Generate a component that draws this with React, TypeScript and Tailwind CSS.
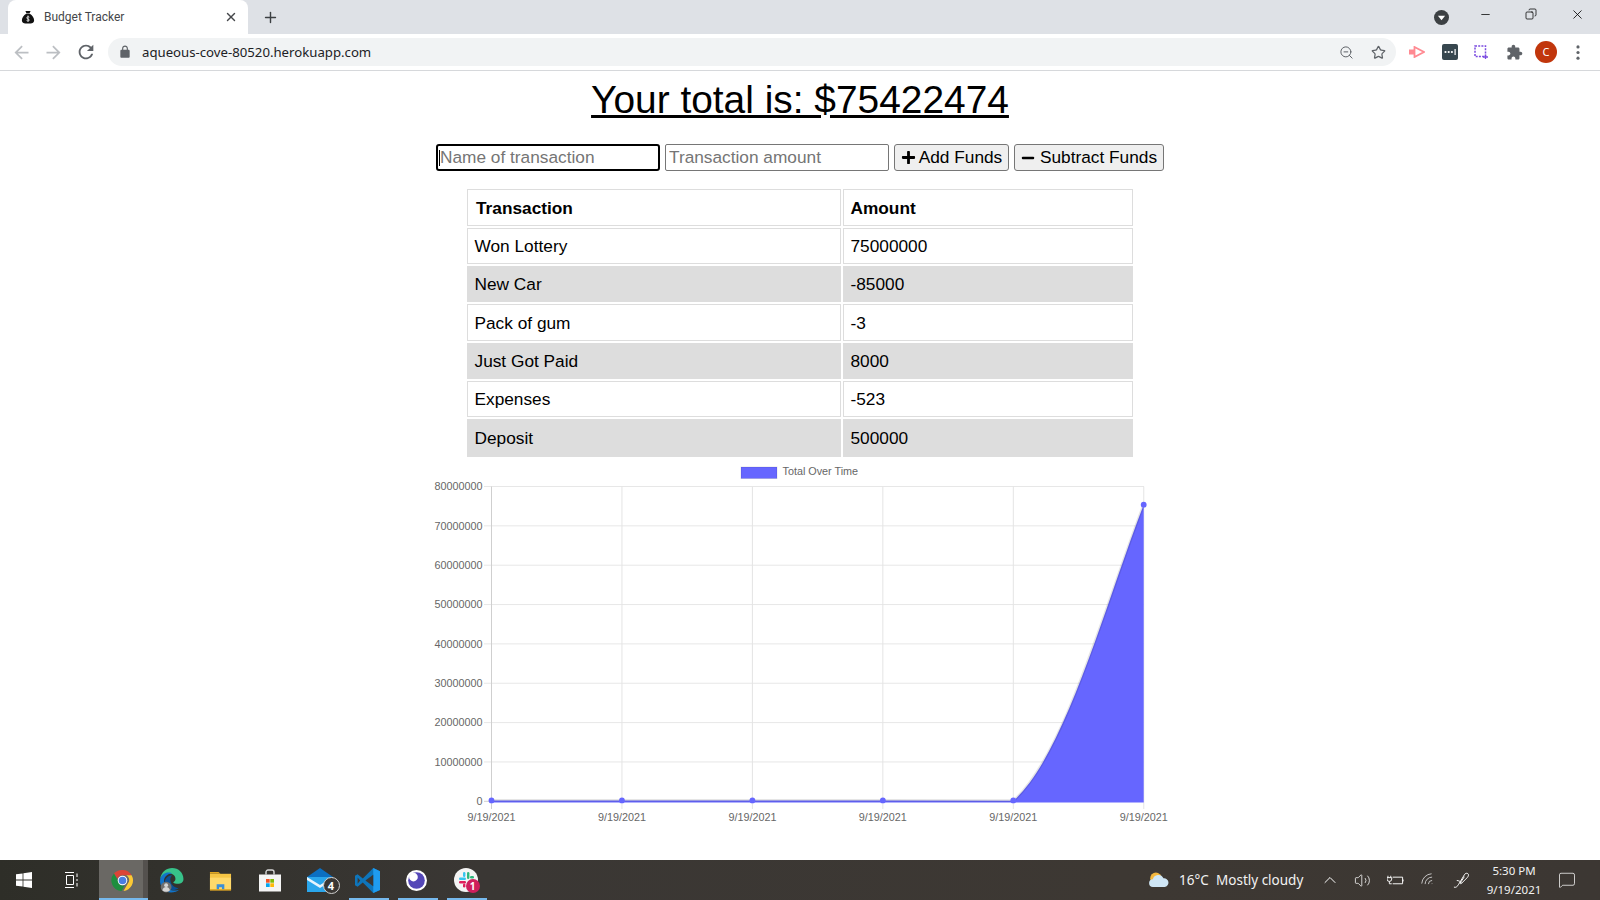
import React from "react";
import { FaPlus, FaMinus } from "react-icons/fa";
import { Plus, X, ZoomOut, Star, Minus, Copy, ChevronUp, Volume2, Wifi, MessageSquare } from "lucide-react";

const rows: [string, string, string][] = [
  ["Won Lottery", "75000000", "h-[36px]"],
  ["New Car", "-85000", "h-[36px]"],
  ["Pack of gum", "-3", "h-[37px]"],
  ["Just Got Paid", "8000", "h-[36px]"],
  ["Expenses", "-523", "h-[36px]"],
  ["Deposit", "500000", "h-[38px]"],
];

const X0 = 491.5;
const XS = 130.45;
const YS = 39.35;
const ticks = [80000000, 70000000, 60000000, 50000000, 40000000, 30000000, 20000000, 10000000, 0];
const xs = [0, 1, 2, 3, 4, 5].map((i) => X0 + XS * i);

const curveD = "C1065 755 1105 605 1143.7 504.7";

function Chart() {
  return (
    <svg viewBox="420 460 760 370" className="block w-[760px] h-[370px] shrink-0 mt-[1px]" style={{ fontFamily: '"Liberation Sans", Arial, sans-serif' }}>
      <rect x="741" y="467" width="36" height="11.5" fill="#6666ff" stroke="rgba(0,0,0,0.1)" strokeWidth="1" />
      <text x="782.5" y="475" fontSize="10.8" fill="#666">Total Over Time</text>
      {ticks.map((t, i) => {
        const y = 486.5 + YS * i;
        return (
          <g key={t}>
            <line x1={484} x2={1144} y1={y} y2={y} stroke={i === 8 ? "#cfcfcf" : "#e7e7e7"} strokeWidth="1" />
            <text x="482.5" y={y + 3.8} fontSize="10.8" fill="#666" textAnchor="end">{t}</text>
          </g>
        );
      })}
      {xs.map((x, i) => (
        <g key={i}>
          <line x1={x} x2={x} y1={486.5} y2={809} stroke={i === 0 ? "#cfcfcf" : "#e4e4e4"} strokeWidth="1" />
          <text x={x} y={820.5} fontSize="10.8" fill="#666" textAnchor="middle">9/19/2021</text>
        </g>
      ))}
      <path d={`M491.5 800.4 L883 800.4 L1013.5 800.7 ${curveD} L1143.7 802.4 L491.5 802.4 Z`} fill="#6666ff" />
      <path d={`M491.5 800.4 L883 800.4 L1013.5 800.7 ${curveD}`} fill="none" stroke="rgba(0,0,0,0.1)" strokeWidth="2.7" />
      {xs.map((x, i) => (
        <circle key={i} cx={i === 5 ? 1143.7 : x} cy={i === 5 ? 504.7 : 800.4} r="2.9" fill="#6666ff" />
      ))}
    </svg>
  );
}

function ChromeLogo() {
  return (
    <svg viewBox="0 0 48 48" className="w-[23px] h-[23px]">
      <path d="M24 2a22 22 0 0 1 19.05 11H24a11 11 0 0 0-10.4 7.3L6.2 9.6A22 22 0 0 1 24 2z" fill="#db4437" />
      <path d="M43.05 13A22 22 0 0 1 26 45.9L35.5 29.6A11 11 0 0 0 32 13z" fill="#fcc934" />
      <path d="M6.2 9.6l9.5 16.8A11 11 0 0 0 28 34.3L22 45.9A22 22 0 0 1 6.2 9.6z" fill="#1e8e3e" />
      <circle cx="24" cy="24" r="10" fill="#fff" />
      <circle cx="24" cy="24" r="8" fill="#4a7de2" />
    </svg>
  );
}

function EdgeLogo() {
  return (
    <svg viewBox="0 0 48 48" className="w-[26px] h-[26px]">
      <path d="M4 22C6 9 16 2 26 2c12 0 21 9 21 20 0 6-5 9-10 9-4 0-8-1-9-3 3-1 5-4 4-8-1-6-7-9-13-8C11 13 6 17 4 22z" fill="#37c28a" />
      <path d="M4 22c2-7 9-12 15-12 3 0 6 1 7 2-8 0-15 6-15 14 0 8 6 15 14 17 5 1 11 1 15-2-4 4-10 6-16 6C12 47 2 36 4 22z" fill="#1173c9" />
      <path d="M12 30c0-8 6-15 14-15-2 2-4 6-3 11 1 6 6 12 15 13-4 3-9 4-13 3-7-1-13-6-13-12z" fill="#0b4f94" />
      <circle cx="15" cy="37" r="10" fill="#6f6f6f" />
      <circle cx="15" cy="33.5" r="3.6" fill="#d5d5d5" />
      <path d="M8 43c1-4 4-6 7-6s6 2 7 6a10 10 0 0 1-14 0z" fill="#d5d5d5" />
    </svg>
  );
}

function Tile({ active, under, children, className }: { active?: boolean; under?: boolean; children: React.ReactNode; className?: string }) {
  return (
    <div className={`relative w-[49px] h-full flex items-center justify-center pr-[2px] ${active ? "bg-[linear-gradient(90deg,#6a6864_0,#6a6864_44px,#54514e_44px)]" : ""} ${className ?? ""}`}>
      {children}
      {active && <div className="absolute left-0 right-0 bottom-0 h-[2px] bg-[#76b9ed]" />}
      {under && <div className="absolute left-[5px] right-[4px] bottom-0 h-[2px] bg-[#76b9ed]" />}
    </div>
  );
}

function Taskbar() {
  return (
    <div className="h-[40px] shrink-0 flex items-center text-white bg-[linear-gradient(90deg,#2e2e28_0%,#3a3734_30%,#3d3833_70%,#3c3733_100%)]" style={{ fontFamily: '"Noto Sans", "Open Sans", sans-serif' }}>
      <div className="w-[48px] h-full flex items-center justify-center">
        <svg viewBox="0 0 16 16" className="w-[16px] h-[16px]" fill="#fff">
          <path d="M0 2.3 6.6 1.4V7.6H0zM7.4 1.3 16 0V7.6H7.4zM0 8.4H6.6V14.6L0 13.7zM7.4 8.4H16V16L7.4 14.7z" />
        </svg>
      </div>
      <div className="w-[51px] h-full flex items-center justify-center pr-[4px]">
        <svg viewBox="0 0 16 16" className="w-[16px] h-[16px]" fill="none" stroke="#fff" strokeWidth="1">
          <path d="M1 .5H10M1 15.5H10M2.5 3.5H9.5V12.5H2.5ZM13 1.5V5M13 7V9M13 11V14.5" />
        </svg>
      </div>
      <Tile active><ChromeLogo /></Tile>
      <Tile className="pr-[4px]"><EdgeLogo /></Tile>
      <Tile>
        <svg viewBox="0 0 24 24" className="w-[23px] h-[23px]">
          <path d="M1 3h9l2 2h-11z" fill="#e2a71f" />
          <rect x="1" y="5" width="22" height="17" fill="#f6c544" />
          <path d="M1 9h22v13H1z" fill="#ffd96a" />
          <path d="M8 16h8v6h-2.5v-3h-3v3H8z" fill="#3d8fd6" />
          <rect x="1" y="21" width="22" height="1.5" fill="#e2a71f" />
        </svg>
      </Tile>
      <Tile>
        <svg viewBox="0 0 24 24" className="w-[24px] h-[25px]">
          <path d="M8 6V3.5C8 2.5 9 1.5 10 1.5h4c1 0 2 1 2 2V6" fill="none" stroke="#d7d7d7" strokeWidth="1.4" />
          <rect x="1" y="6" width="22" height="17" fill="#f5f5f5" />
          <rect x="8" y="10.5" width="3.7" height="3.7" fill="#f35325" />
          <rect x="12.3" y="10.5" width="3.7" height="3.7" fill="#81bc06" />
          <rect x="8" y="14.8" width="3.7" height="3.7" fill="#05a6f0" />
          <rect x="12.3" y="14.8" width="3.7" height="3.7" fill="#ffba08" />
        </svg>
      </Tile>
      <Tile>
        <div className="relative w-[26px] h-[24px] translate-x-[1px]">
          <svg viewBox="0 0 26 24" className="w-[26px] h-[24px]">
            <path d="M0 9 13 0l13 9v3H0z" fill="#0b6fc2" />
            <rect x="0" y="9" width="26" height="15" fill="#2aa6ec" />
            <path d="M0 9l13 8 13-8v3l-13 8L0 12z" fill="#e6f4fd" />
          </svg>
          <div className="absolute left-[16px] top-[9px] w-[17px] h-[17px] rounded-full border border-[#d0d0d0] bg-[#3a3734] flex items-center justify-center text-[11px] font-bold leading-none">4</div>
        </div>
      </Tile>
      <Tile under>
        <svg viewBox="0 0 24 24" className="w-[25px] h-[25px]">
          <path d="M17.5 0 7.5 10 2.5 6 0 7.5v9L2.5 18l5-4 10 10L24 21V3z" fill="#0e75bb" />
          <path d="M17.5 0v24L24 21V3z" fill="#1f9cf0" />
          <path d="M17.5 6.5 10 12l7.5 5.5z" fill="#3a3734" />
          <path d="M2.5 9 5 12l-2.5 3z" fill="#3a3734" />
        </svg>
      </Tile>
      <Tile under>
        <svg viewBox="0 0 24 24" className="w-[21px] h-[21px]">
          <circle cx="12" cy="12" r="12" fill="#fff" />
          <circle cx="12" cy="12" r="9.5" fill="#5447b8" />
          <circle cx="8.5" cy="8" r="5" fill="#fff" />
        </svg>
      </Tile>
      <Tile under>
        <div className="relative w-[24px] h-[24px]">
          <svg viewBox="0 0 24 24" className="w-[24px] h-[24px]">
            <circle cx="12" cy="12" r="12" fill="#f4f4f4" />
            <rect x="5" y="9.5" width="7" height="2.4" rx="1.2" fill="#36c5f0" />
            <rect x="9" y="4" width="2.4" height="5" rx="1.2" fill="#36c5f0" />
            <rect x="13" y="4" width="2.4" height="7" rx="1.2" fill="#2eb67d" />
            <rect x="16" y="8" width="4" height="2.4" rx="1.2" fill="#2eb67d" />
            <rect x="5" y="13" width="7" height="2.4" rx="1.2" fill="#e01e5a" />
            <rect x="9" y="15.5" width="2.4" height="4" rx="1.2" fill="#e01e5a" />
          </svg>
          <div className="absolute left-[12px] top-[11px] w-[14px] h-[14px] rounded-full bg-[#cf1e5c] flex items-center justify-center text-[10px] font-bold leading-none">1</div>
        </div>
      </Tile>
      <div className="ml-auto flex items-center h-full">
        <svg viewBox="0 0 24 18" className="w-[21px] h-[16px] mr-[10px]">
          <circle cx="9" cy="7" r="6.5" fill="#f3b73d" />
          <path d="M6 17a4.5 4.5 0 0 1-.5-9 6.5 6.5 0 0 1 12.2-1A5 5 0 0 1 19 17z" fill="#cfe6f5" />
        </svg>
        <span className="text-[13.5px] w-[37px] pt-[1px] text-[#f2f2f2] whitespace-nowrap">16°C</span>
        <span className="text-[13.5px] w-[98px] pt-[1px] text-[#f2f2f2] whitespace-nowrap">Mostly cloudy</span>
        <div className="w-[32px] flex justify-center"><ChevronUp size={20} strokeWidth={1.2} /></div>
        <div className="w-[32px] flex justify-center"><Volume2 size={17} strokeWidth={1.1} /></div>
        <div className="w-[34px] flex justify-center">
          <svg viewBox="0 0 18 12" className="w-[17px] h-[12px]" fill="none" stroke="#fff" strokeWidth="1">
            <path d="M6 3h10.5v7H6M17 5.5v2M1 1.5v2M4 1.5v2M0 3.5h5V5a2.5 2.5 0 0 1-5 0zM2.5 7.5V10H5" />
          </svg>
        </div>
        <div className="w-[32px] flex justify-center"><Wifi size={16} strokeWidth={1.2} className="text-[#dcdcdc] -rotate-45" /></div>
        <div className="w-[34px] flex justify-center">
          <svg viewBox="0 0 18 18" className="w-[17px] h-[17px]" fill="none" stroke="#fff" strokeWidth="1">
            <path d="M1 16c2 1 4-1 5-3l6-10c1-2 3-2 4-1s0 3-1 4l-6 6c-1 1-2 0-1-1l4-6" />
            <path d="M4 9c2 0 4 1 5 3" />
          </svg>
        </div>
        <div className="w-[72px] flex flex-col items-center text-[11.5px] leading-[19px] text-[#f2f2f2]">
          <span>5:30 PM</span>
          <span>9/19/2021</span>
        </div>
        <div className="w-[34px] mr-[16px] flex justify-center"><MessageSquare size={18} strokeWidth={1} /></div>
      </div>
    </div>
  );
}

function M({ d, size, className }: { d: string; size: number; className: string }) {
  return (
    <svg viewBox="0 0 24 24" width={size} height={size} fill="currentColor" className={`shrink-0 ${className}`}><path d={d} /></svg>
  );
}

function ChromeBar() {
  return (
    <div className="shrink-0" style={{ fontFamily: '"Noto Sans", "Open Sans", sans-serif' }}>
      <div className="h-[34px] bg-[#dee1e6] flex items-end pl-[8px]">
        <div className="w-[240px] h-[34px] bg-white rounded-t-[8px] flex items-center pl-[13px] pr-[10px]">
          <svg viewBox="0 0 16 16" className="w-[14px] h-[14px] shrink-0" fill="#111">
            <path d="M5 1h6l-1.3 2.6H6.3zM6 4.4h4c3 1.7 5 5 5 7.6 0 2.4-2 3.4-4 3.4H5c-2 0-4-1-4-3.4 0-2.6 2-5.9 5-7.6z" />
            <path d="M8 6.3v7M9.6 8.2C9 7.6 6.6 7.5 6.6 9c0 1.6 2.9 1 2.9 2.5 0 1.4-2.4 1.3-3.1.6" stroke="#fff" strokeWidth="0.9" fill="none" />
          </svg>
          <span className="ml-[9px] text-[12px] text-[#45474a] whitespace-nowrap" style={{ fontFamily: "Roboto, sans-serif" }}>Budget Tracker</span>
          <X size={14} strokeWidth={2.4} className="ml-auto text-[#45474a]" />
        </div>
        <div className="h-[34px] w-[34px] flex items-center justify-center ml-[5px]">
          <Plus size={17} strokeWidth={2} className="text-[#3c4043]" />
        </div>
        <div className="ml-auto h-[34px] flex items-center text-black">
          <div className="w-[15px] h-[15px] rounded-full bg-[#3c4043] flex items-center justify-center mr-[14px]">
            <svg viewBox="0 0 10 10" className="w-[9px] h-[9px]"><path d="M1 3h8L5 8z" fill="#fff" /></svg>
          </div>
          <div className="w-[45px] flex justify-center -translate-y-[3px]"><Minus size={13} strokeWidth={1.4} /></div>
          <div className="w-[46px] flex justify-center -translate-y-[3px]"><Copy size={12} strokeWidth={1.5} className="-scale-x-100" /></div>
          <div className="w-[46px] flex justify-center -translate-y-[3px]"><X size={15} strokeWidth={1.3} /></div>
        </div>
      </div>
      <div className="h-[37px] bg-white border-b border-[#d6d8db] flex items-center">
        <div className="w-[108px] flex items-center shrink-0 pl-[11px]">
          <M size={21} className="text-[#bcbfc3]" d="M20 11H7.83l5.59-5.59L12 4l-8 8 8 8 1.41-1.41L7.83 13H20v-2z" />
          <M size={21} className="text-[#bcbfc3] ml-[11px]" d="M12 4l-1.41 1.41L16.17 11H4v2h12.17l-5.58 5.59L12 20l8-8z" />
          <M size={22} className="text-[#5f6368] ml-[11px]" d="M17.65 6.35C16.2 4.9 14.21 4 12 4c-4.42 0-7.99 3.58-7.99 8s3.57 8 7.99 8c3.73 0 6.84-2.55 7.73-6h-2.08c-.82 2.33-3.04 4-5.65 4-3.31 0-6-2.69-6-6s2.69-6 6-6c1.66 0 3.14.69 4.22 1.78L13 11h7V4l-2.35 2.35z" />
        </div>
        <div className="w-[1288px] h-[28px] rounded-full bg-[#f1f3f4] flex items-center pl-[10px] shrink-0">
          <M size={14} className="text-[#5f6368]" d="M18 8h-1V6c0-2.76-2.24-5-5-5S7 3.24 7 6v2H6c-1.1 0-2 .9-2 2v10c0 1.1.9 2 2 2h12c1.1 0 2-.9 2-2V10c0-1.1-.9-2-2-2zM9 6c0-1.66 1.34-3 3-3s3 1.34 3 3v2H9V6z" />
          <span className="ml-[10px] pt-[1px] text-[13.2px] text-[#202124] whitespace-nowrap">aqueous-cove-80520.herokuapp.com</span>
          <ZoomOut size={15} strokeWidth={1.6} className="ml-auto text-[#5f6368]" />
          <Star size={15} strokeWidth={2} className="ml-[17px] mr-[10px] text-[#5f6368]" />
        </div>
        <div className="flex items-center flex-1 min-w-0">
          <div className="w-[42px] flex justify-center">
            <svg viewBox="0 0 16 12" className="w-[16px] h-[12px]" fill="none">
              <rect x="0" y="3.5" width="5" height="5" fill="#ff8a92" />
              <path d="M5.5 1 15 6 5.5 11z" stroke="#ff8a92" strokeWidth="1.8" />
            </svg>
          </div>
          <div className="w-[24px] flex justify-center">
            <svg viewBox="0 0 16 16" className="w-[16px] h-[16px]">
              <rect width="16" height="16" rx="2" fill="#37474f" />
              <circle cx="3.5" cy="8" r="1.1" fill="#fff" /><circle cx="6.7" cy="8" r="1.1" fill="#fff" /><circle cx="9.9" cy="8" r="1.1" fill="#fff" />
              <rect x="12.5" y="5" width="1.2" height="6" fill="#fff" />
            </svg>
          </div>
          <div className="w-[38px] flex justify-center">
            <svg viewBox="0 0 14 14" className="w-[14px] h-[14px]" fill="none">
              <rect x="1" y="1" width="10.5" height="10.5" stroke="#7b4be0" strokeWidth="1.5" strokeDasharray="2 1.2" />
              <path d="M9 12h5M11.5 9.5v5" stroke="#7b4be0" strokeWidth="1.3" />
            </svg>
          </div>
          <div className="w-[28px] flex justify-center">
            <M size={17} className="text-[#5f6368]" d="M20.5 11H19V7c0-1.1-.9-2-2-2h-4V3.5C13 2.12 11.88 1 10.5 1S8 2.12 8 3.5V5H4c-1.1 0-1.99.9-1.99 2v3.8H3.5c1.49 0 2.7 1.21 2.7 2.7s-1.21 2.7-2.7 2.7H2V20c0 1.1.9 2 2 2h3.8v-1.5c0-1.49 1.21-2.7 2.7-2.7 1.49 0 2.7 1.21 2.7 2.7V22H17c1.1 0 2-.9 2-2v-4h1.5c1.38 0 2.5-1.12 2.5-2.5S21.88 11 20.5 11z" />
          </div>
          <div className="w-[36px] flex justify-center">
            <div className="w-[22px] h-[22px] rounded-full bg-[#c1360c] text-white text-[11px] flex items-center justify-center">C</div>
          </div>
          <div className="w-[28px] flex justify-center">
            <svg viewBox="0 0 4 16" className="w-[4px] h-[15px]" fill="#5f6368"><circle cx="2" cy="2" r="1.7" /><circle cx="2" cy="8" r="1.7" /><circle cx="2" cy="14" r="1.7" /></svg>
          </div>
        </div>
      </div>
    </div>
  );
}

export default function App() {
  return (
    <div className="w-[1600px] h-[900px] flex flex-col overflow-hidden bg-white">
      <ChromeBar />
      <main className="flex-1 min-h-0 flex flex-col items-center" style={{ fontFamily: '"Liberation Sans", Arial, sans-serif' }}>
        <h1 className="text-[38.88px] leading-[48px] mt-[4px] pt-[1px] h-[48px] underline text-black decoration-[3px] whitespace-nowrap">Your total is: $75422474</h1>
        <form className="flex gap-[5px] mt-[21px] text-[17.28px]">
          <div className="relative">
            <input placeholder="Name of transaction" className="w-[224px] h-[27px] px-[2px] border-2 border-black rounded-[3px] outline-none placeholder:text-[#757575] text-[17.28px]" />
            <div className="absolute left-[3px] top-[6px] w-px h-[16px] bg-black" />
          </div>
          <input placeholder="Transaction amount" className="w-[224px] h-[27px] px-[3px] border border-[#767676] rounded-[2px] outline-none placeholder:text-[#757575] text-[17.28px]" />
          <button type="button" className="w-[115px] h-[27px] border border-[#767676] rounded-[3px] bg-[#efefef] flex items-center justify-center gap-[3px] text-black whitespace-nowrap"><FaPlus size={15} />Add Funds</button>
          <button type="button" className="w-[150px] h-[27px] border border-[#767676] rounded-[3px] bg-[#efefef] flex items-center justify-center gap-[5px] text-black whitespace-nowrap"><FaMinus size={14} />Subtract Funds</button>
        </form>
        <table className="mt-[16px] w-[670px] text-[17.28px] text-black border-separate border-spacing-[2px] table-fixed">
          <colgroup><col className="w-[373.5px]" /><col /></colgroup>
          <thead>
            <tr>
              <th className="h-[37px] p-0 pt-[2px] pl-[8px] text-left font-bold border-[1.5px] border-[#dddddd]">Transaction</th>
              <th className="h-[37px] p-0 pt-[2px] pl-[7px] text-left font-bold border-[1.5px] border-[#dddddd]">Amount</th>
            </tr>
          </thead>
          <tbody>
            {rows.map(([n, a, h], i) => (
              <tr key={n} className={`${h} ${i % 2 === 1 ? "bg-[#dddddd]" : ""}`}>
                <td className="p-0 pt-[2px] pl-[6.5px] border-[1.5px] border-[#dddddd]">{n}</td>
                <td className="p-0 pt-[2px] pl-[7px] border-[1.5px] border-[#dddddd]">{a}</td>
              </tr>
            ))}
          </tbody>
        </table>
        <Chart />
      </main>
      <Taskbar />
    </div>
  );
}
